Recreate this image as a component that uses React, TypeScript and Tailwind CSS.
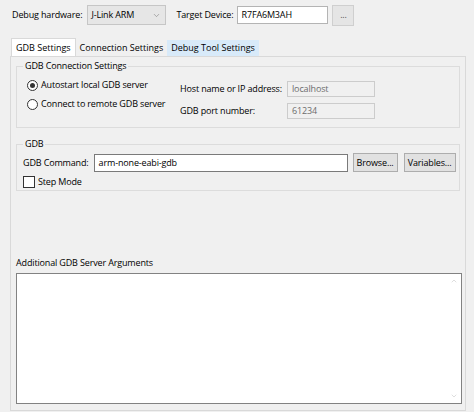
import { ChevronDown, ChevronUp } from "lucide-react";

function Btn({ label, className }: { label: string; className: string }) {
  return (
    <button
      type="button"
      className={`flex items-center justify-center border border-[#adadad] bg-[#e1e1e1] ${className}`}
    >
      {label}
    </button>
  );
}

export default function App() {
  return (
    <div className="w-[474px] h-[412px] overflow-hidden bg-[#f0f0f0] text-[9px] leading-[12px] tracking-[-0.15px] text-black font-['Open_Sans','Noto_Sans',sans-serif]">
      {/* top row */}
      <div className="flex items-center pl-[12px] pt-[5px] h-[25px]">
        <span>Debug hardware:</span>
        <div className="ml-[5px] flex h-[20px] w-[79px] items-center justify-between border border-[#c6c6c6] bg-[#e6e6e6] pl-[3px] pr-[4px]">
          <span>J-Link ARM</span>
          <ChevronDown className="h-[9px] w-[9px] text-[#7a7a7a]" strokeWidth={1.5} />
        </div>
        <span className="ml-[10px]">Target Device:</span>
        <div className="ml-[4px] flex h-[18px] w-[91px] items-center border border-[#b4b4b4] bg-white pl-[3px]">
          R7FA6M3AH
        </div>
        <button
          type="button"
          className="ml-[4px] flex h-[21px] w-[22px] items-center justify-center border border-[#cfcfcf] bg-[#e5e5e5] text-[#555]"
        >
          ...
        </button>
      </div>

      {/* tabs */}
      <div className="ml-[11px] mt-[13px] flex h-[18px] items-end tracking-normal">
        <div className="flex h-[18px] items-center border border-b-0 border-[#d9d9d9] bg-white px-[4px]">
          GDB Settings
        </div>
        <div className="flex h-[16px] items-center px-[4px]">Connection Settings</div>
        <div className="flex h-[16px] items-center bg-[#d8eaf9] px-[4px]">Debug Tool Settings</div>
      </div>

      {/* panel */}
      <div className="ml-[10px] flex h-[355px] w-[456px] flex-col border border-[#d9d9d9] bg-[#f0f0f0] px-[5px]">
        <fieldset className="mt-[3px] border border-[#dcdcdc] px-0 pb-[8px]">
          <legend className="ml-[6px] px-[2px]">GDB Connection Settings</legend>
          <div className="flex">
            <div className="ml-[10px] mt-[7px] flex w-[153px] flex-col gap-[7px]">
              <label className="flex items-center gap-[3px]">
                <span className="flex h-[11px] w-[11px] items-center justify-center rounded-full border border-[#333] bg-white">
                  <span className="h-[5px] w-[5px] rounded-full bg-[#333]" />
                </span>
                Autostart local GDB server
              </label>
              <label className="flex items-center gap-[3px]">
                <span className="h-[11px] w-[11px] rounded-full border border-[#333] bg-white" />
                Connect to remote GDB server
              </label>
            </div>
            <div className="mt-[9px] grid grid-cols-[107px_88px] items-center gap-y-[6px]">
              <span>Host name or IP address:</span>
              <div className="flex h-[16px] items-center border border-[#cccccc] bg-[#f0f0f0] pl-[4px] text-[#6d6d6d]">
                localhost
              </div>
              <span>GDB port number:</span>
              <div className="flex h-[16px] items-center border border-[#cccccc] bg-[#f0f0f0] pl-[4px] text-[#6d6d6d]">
                61234
              </div>
            </div>
          </div>
        </fieldset>

        <fieldset className="mt-[10px] border border-[#dcdcdc] px-0 pb-[2px]">
          <legend className="ml-[6px] px-[2px]">GDB</legend>
          <div className="ml-[6px] mt-[3px] flex items-center">
            <span>GDB Command:</span>
            <div className="ml-[5px] flex h-[18px] w-[254px] items-center border border-[#7a7a7a] bg-white pl-[4px]">
              arm-none-eabi-gdb
            </div>
            <Btn label="Browse..." className="ml-[5px] h-[19px] w-[45px]" />
            <Btn label="Variables..." className="ml-[6px] h-[19px] w-[52px]" />
          </div>
          <label className="ml-[6px] mt-[4px] flex items-center gap-[3px]">
            <span className="h-[12px] w-[12px] border border-[#333] bg-white" />
            Step Mode
          </label>
        </fieldset>

        <div className="mt-[66px]">Additional GDB Server Arguments</div>
        <div className="mt-[4px] flex h-[131px] w-[446px] border border-[#828282] bg-white">
          <div className="flex-1" />
          <div className="flex w-[14px] flex-col items-center justify-between py-[3px]">
            <ChevronUp className="h-[8px] w-[8px] text-[#bdbdbd]" strokeWidth={1.5} />
            <ChevronDown className="h-[8px] w-[8px] text-[#bdbdbd]" strokeWidth={1.5} />
          </div>
        </div>
      </div>
    </div>
  );
}
